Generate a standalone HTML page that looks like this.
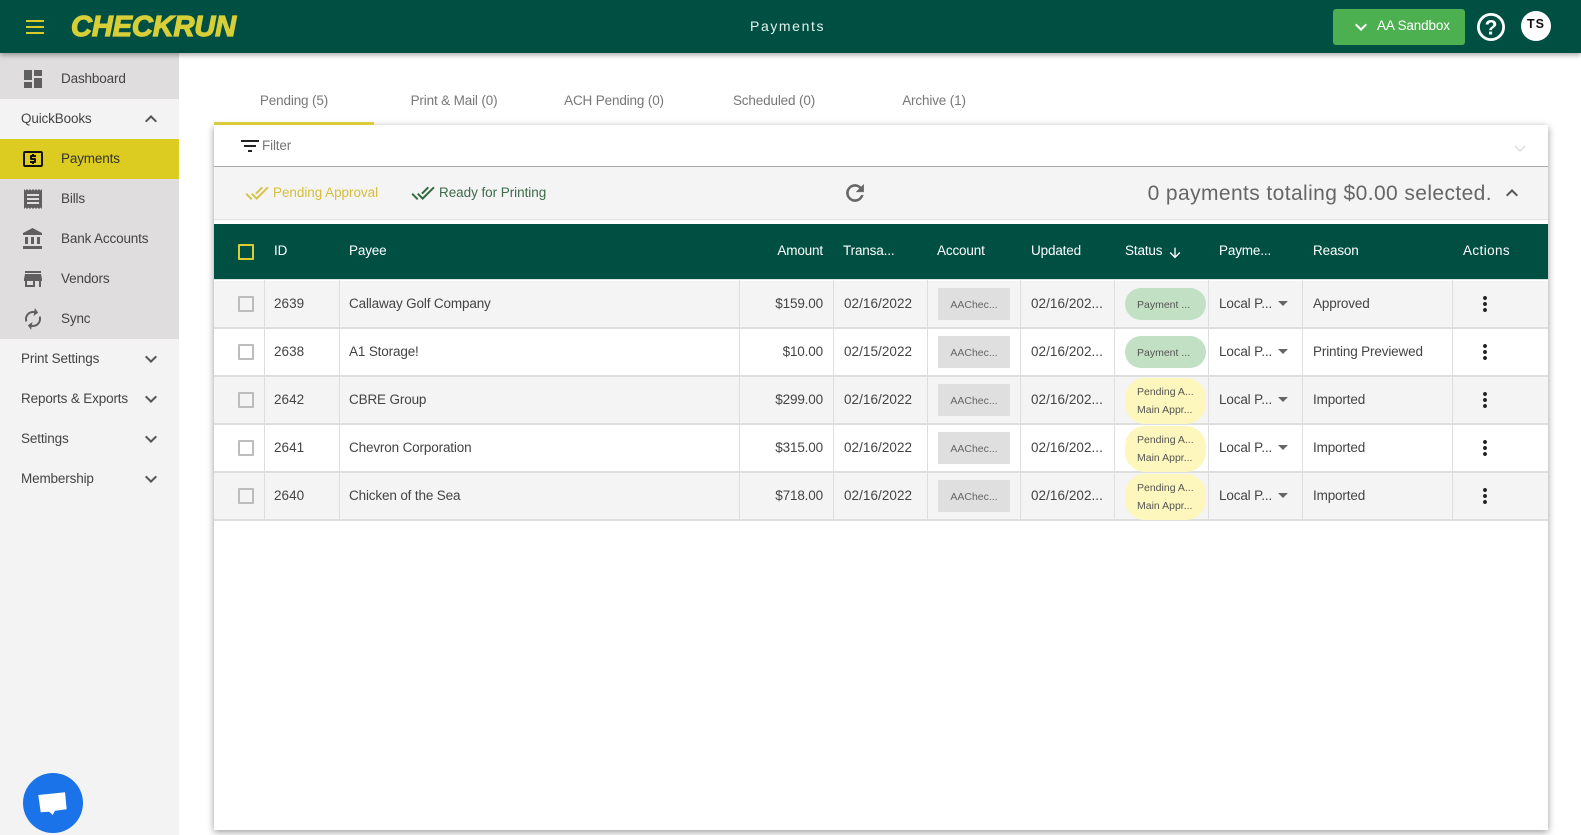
<!DOCTYPE html>
<html><head><meta charset="utf-8"><title>Payments</title>
<style>
*{box-sizing:border-box}
html,body{margin:0;padding:0;width:1581px;height:835px;overflow:hidden;background:#fff;font-family:"Liberation Sans",sans-serif;font-size:13.5px;letter-spacing:-.15px;color:#444}
.a{position:absolute;white-space:nowrap}
svg{position:absolute;display:block}
.hdr{left:0;top:0;width:1581px;height:53px;background:#004f43;box-shadow:0 2px 5px rgba(0,0,0,.35);z-index:5}
.side{left:0;top:53px;width:179px;height:782px;background:#f3f3f3}
.it{left:0;width:179px;height:40px;line-height:40px;color:#444}
.it .t{position:absolute;left:61px;top:0}
.grey{background:#dfdddd}
.card{left:214px;top:125px;width:1334px;height:705px;background:#fff;box-shadow:0 2px 7px rgba(0,0,0,.4)}
.th{color:#fff;top:224px;height:55px;line-height:53px;z-index:2}
.cell{height:48px;line-height:47px;color:#444}
.d{letter-spacing:.05px}
.vl{width:1px;background:#dedede;top:280px;height:241px}
.row{left:214px;width:1334px;height:48px;border-bottom:2px solid #dedede}
.cb{left:238px;width:16px;height:16px;border:2px solid #bdbdbd;border-radius:1px}
.acc{left:938px;width:72px;height:32px;background:#dfdfdf;color:#666;font-size:10.5px;line-height:34px;text-align:center;letter-spacing:0}
.pill{left:1125px;width:81px;border-radius:20px;font-size:10.5px;color:#555;letter-spacing:0;padding-left:12px}
</style></head><body>

<div class="a hdr"></div>
<svg style="left:25px;top:19px;z-index:6" width="20" height="16"><path d="M1 2h18M1 8h18M1 14h18" stroke="#d8cb2a" stroke-width="2"/></svg>
<svg style="left:70px;top:8px;z-index:6" width="170" height="36"><text x="1" y="28" font-family="Liberation Sans" font-weight="700" font-style="italic" font-size="28.5" textLength="165" lengthAdjust="spacingAndGlyphs" fill="#d8cf38" stroke="#d8cf38" stroke-width="1.2">CHECKRUN</text></svg>
<div class="a" style="left:750px;top:18px;color:#e6f0ee;letter-spacing:1.6px;z-index:6;font-size:14px">Payments</div>
<div class="a" style="left:1333px;top:9px;width:132px;height:36px;background:#4caf50;border-radius:3px;z-index:6"></div>
<svg style="left:1349px;top:15px;z-index:7" width="24" height="24" viewBox="0 0 24 24"><path fill="#fff" d="M16.59 8.59L12 13.17 7.41 8.59 6 10l6 6 6-6z"/></svg>
<div class="a" style="left:1377px;top:18px;color:#fff;z-index:7">AA Sandbox</div>
<svg style="left:1476px;top:12px;z-index:7" width="30" height="30" viewBox="0 0 30 30"><circle cx="15" cy="15" r="12.600" fill="none" stroke="#fff" stroke-width="2.800"/><text x="15" y="22.500" text-anchor="middle" font-family="Liberation Sans" font-weight="700" font-size="21" fill="#fff">?</text></svg>
<div class="a" style="left:1521px;top:11px;width:30px;height:30px;border-radius:50%;background:#fff;color:#111;z-index:7;font-weight:700;font-size:12.500px;text-align:center;line-height:27px;letter-spacing:1px">TS</div>

<div class="a side"></div>
<div class="a it grey" style="top:59px;height:40px"><svg style="left:21px;top:8px" width="24" height="24" viewBox="0 0 24 24"><path fill="#5f5f5f" d="M3 13h8V3H3v10zm0 8h8v-6H3v6zm10 0h8V11h-8v10zm0-18v6h8V3h-8z"/></svg><span class="t">Dashboard</span></div>
<div class="a" style="left:0;top:53px;width:179px;height:6px;background:#dfdddd"></div>
<div class="a it" style="top:99px"><span class="t" style="left:21px">QuickBooks</span><svg style="left:139px;top:8px" width="24" height="24" viewBox="0 0 24 24"><path fill="#555" d="M12 8l-6 6 1.41 1.41L12 10.83l4.59 4.58L18 14z"/></svg></div>
<div class="a it" style="top:139px;background:#dccb20;color:#333"><svg style="left:21px;top:8px" width="24" height="24" viewBox="0 0 24 24"><path fill="#111" d="M11 17h2v-1h1c.55 0 1-.45 1-1v-3c0-.55-.45-1-1-1h-3v-1h4V8h-2V7h-2v1h-1c-.55 0-1 .45-1 1v3c0 .55.45 1 1 1h3v1H9v2h2v1zm9-13H4c-1.11 0-1.99.89-1.99 2L2 18c0 1.11.89 2 2 2h16c1.11 0 2-.89 2-2V6c0-1.11-.89-2-2-2zm0 14H4V6h16v12z"/></svg><span class="t">Payments</span></div>
<div class="a it grey" style="top:179px"><svg style="left:21px;top:8px" width="24" height="24" viewBox="0 0 24 24"><path fill="#5f5f5f" d="M18 17H6v-2h12v2zm0-4H6v-2h12v2zm0-4H6V7h12v2zM3 22l1.5-1.5L6 22l1.5-1.5L9 22l1.5-1.5L12 22l1.5-1.5L15 22l1.5-1.5L18 22l1.5-1.5L21 22V2l-1.5 1.5L18 2l-1.5 1.5L15 2l-1.5 1.5L12 2l-1.5 1.5L9 2 7.5 3.5 6 2 4.5 3.5 3 2v20z"/></svg><span class="t">Bills</span></div>
<div class="a it grey" style="top:219px"><svg style="left:21px;top:8px" width="24" height="24" viewBox="0 0 24 24"><path fill="#5f5f5f" d="M4 10v7h3v-7H4zm6 0v7h3v-7h-3zM2 22h19v-3H2v3zm14-12v7h3v-7h-3zm-4.5-9L2 6v2h19V6l-9.5-5z"/></svg><span class="t">Bank Accounts</span></div>
<div class="a it grey" style="top:259px"><svg style="left:21px;top:8px" width="24" height="24" viewBox="0 0 24 24"><path fill="#5f5f5f" d="M20 4H4v2h16V4zm1 10v-2l-1-5H4l-1 5v2h1v6h10v-6h4v6h2v-6h1zm-9 4H6v-4h6v4z"/></svg><span class="t">Vendors</span></div>
<div class="a it grey" style="top:299px"><svg style="left:21px;top:8px;transform:scaleX(-1) rotate(-10deg)" width="24" height="24" viewBox="0 0 24 24"><path fill="#5f5f5f" d="M12 4V1L8 5l4 4V6c3.31 0 6 2.69 6 6 0 1.01-.25 1.97-.7 2.8l1.46 1.46C19.54 15.03 20 13.57 20 12c0-4.42-3.58-8-8-8zm0 14c-3.31 0-6-2.69-6-6 0-1.01.25-1.97.7-2.8L5.24 7.74C4.46 8.97 4 10.43 4 12c0 4.42 3.58 8 8 8v3l4-4-4-4v3z"/></svg><span class="t">Sync</span></div>
<div class="a it" style="top:339px"><span class="t" style="left:21px">Print Settings</span><svg style="left:139px;top:8px" width="24" height="24" viewBox="0 0 24 24"><path fill="#555" d="M16.59 8.59L12 13.17 7.41 8.59 6 10l6 6 6-6z"/></svg></div>
<div class="a it" style="top:379px"><span class="t" style="left:21px">Reports &amp; Exports</span><svg style="left:139px;top:8px" width="24" height="24" viewBox="0 0 24 24"><path fill="#555" d="M16.59 8.59L12 13.17 7.41 8.59 6 10l6 6 6-6z"/></svg></div>
<div class="a it" style="top:419px"><span class="t" style="left:21px">Settings</span><svg style="left:139px;top:8px" width="24" height="24" viewBox="0 0 24 24"><path fill="#555" d="M16.59 8.59L12 13.17 7.41 8.59 6 10l6 6 6-6z"/></svg></div>
<div class="a it" style="top:459px"><span class="t" style="left:21px">Membership</span><svg style="left:139px;top:8px" width="24" height="24" viewBox="0 0 24 24"><path fill="#555" d="M16.59 8.59L12 13.17 7.41 8.59 6 10l6 6 6-6z"/></svg></div>

<svg style="left:23px;top:773px" width="60" height="60" viewBox="0 0 60 60"><circle cx="30" cy="30" r="30" fill="#1a73e8"/><path fill="#fff" d="M15.300 22L42 19.300 43.700 36.300 32 37.700 29.700 42 26.300 38.700 17.700 39.300z"/></svg>

<!-- tabs -->
<div class="a" style="left:214px;top:93px;width:160px;text-align:center;color:#777">Pending (5)</div>
<div class="a" style="left:374px;top:93px;width:160px;text-align:center;color:#777">Print &amp; Mail (0)</div>
<div class="a" style="left:534px;top:93px;width:160px;text-align:center;color:#777">ACH Pending (0)</div>
<div class="a" style="left:694px;top:93px;width:160px;text-align:center;color:#777">Scheduled (0)</div>
<div class="a" style="left:854px;top:93px;width:160px;text-align:center;color:#777">Archive (1)</div>

<div class="a card"></div>
<div class="a" style="left:214px;top:122px;width:160px;height:3px;background:#dccb3a;z-index:3"></div>
<!-- filter -->
<svg style="left:238px;top:134px" width="24" height="24" viewBox="0 0 24 24"><path fill="#222" d="M10 18h4v-2h-4v2zM3 6v2h18V6H3zm3 7h12v-2H6v2z"/></svg>
<div class="a" style="left:262px;top:138px;color:#777">Filter</div>
<svg style="left:1508px;top:136px" width="24" height="24" viewBox="0 0 24 24"><path fill="none" stroke="#ddd" stroke-width="1.4" d="M7 10l5 5 5-5"/></svg>
<div class="a" style="left:214px;top:166px;width:1334px;height:54px;background:#f4f4f4;border-top:1.5px solid #aaa;border-bottom:1.5px solid #e2e2e2"></div>
<svg style="left:245px;top:181px" width="24" height="24" viewBox="0 0 24 24"><path fill="#d8c44a" d="M18 7l-1.41-1.41-6.34 6.34 1.41 1.410L18 7zm4.240-1.410L11.660 16.170 7.480 12l-1.410 1.410L11.660 19l12-12-1.420-1.410zM.41 13.410L6 19l1.410-1.410L1.830 12 .41 13.410z"/></svg>
<div class="a" style="left:273px;top:185px;color:#d6bd3c;letter-spacing:-.05px">Pending Approval</div>
<svg style="left:411px;top:181px" width="24" height="24" viewBox="0 0 24 24"><path fill="#2f6b3f" d="M18 7l-1.41-1.41-6.34 6.34 1.41 1.410L18 7zm4.240-1.410L11.660 16.170 7.480 12l-1.410 1.410L11.660 19l12-12-1.420-1.410zM.41 13.410L6 19l1.410-1.410L1.830 12 .41 13.410z"/></svg>
<div class="a" style="left:439px;top:185px;color:#3f6b4a;letter-spacing:-.05px">Ready for Printing</div>
<svg style="left:842px;top:180px" width="26" height="26" viewBox="0 0 24 24"><path fill="#666" stroke="#666" stroke-width=".4" d="M17.65 6.350C16.200 4.900 14.210 4 12 4c-4.420 0-7.990 3.580-7.990 8s3.570 8 7.990 8c3.730 0 6.840-2.550 7.730-6h-2.080c-.82 2.330-3.040 4-5.650 4-3.310 0-6-2.690-6-6s2.690-6 6-6c1.660 0 3.140.69 4.220 1.780L13 11h7V4l-2.350 2.350z"/></svg>
<div class="a" style="left:1132px;top:182px;width:360px;text-align:right;font-size:21px;color:#666;letter-spacing:.4px">0 payments totaling $0.00 selected.</div>
<svg style="left:1500px;top:181px" width="24" height="24" viewBox="0 0 24 24"><path fill="#555" d="M12 8l-6 6 1.41 1.41L12 10.830l4.590 4.580L18 14z"/></svg>

<!-- table head -->
<div class="a" style="left:214px;top:224px;width:1334px;height:56px;background:#004f43;border-bottom:1px solid #d8e6e2"></div>
<div class="a" style="left:238px;top:244px;width:16px;height:16px;border:2px solid #d8cf38;border-radius:1px;z-index:2"></div>
<div class="a th" style="left:274px">ID</div>
<div class="a th" style="left:349px">Payee</div>
<div class="a th" style="left:723px;width:100px;text-align:right">Amount</div>
<div class="a th" style="left:843px">Transa...</div>
<div class="a th" style="left:937px">Account</div>
<div class="a th" style="left:1031px">Updated</div>
<div class="a th" style="left:1125px">Status</div>
<svg style="left:1167px;top:245px;z-index:3" width="16" height="16" viewBox="0 0 24 24"><path fill="#fff" d="M20 12l-1.410-1.410L13 16.170V4h-2v12.170l-5.580-5.590L4 12l8 8 8-8z"/></svg>
<div class="a th" style="left:1219px">Payme...</div>
<div class="a th" style="left:1313px">Reason</div>
<div class="a th" style="left:1463px;letter-spacing:.4px">Actions</div>

<!-- rows -->
<div class="a row" style="top:281px;background:#f4f4f4"></div>
<div class="a row" style="top:329px;background:#fff"></div>
<div class="a row" style="top:377px;background:#f4f4f4"></div>
<div class="a row" style="top:425px;background:#fff"></div>
<div class="a row" style="top:473px;background:#f4f4f4"></div>
<div class="a vl" style="left:264px"></div><div class="a vl" style="left:339px"></div><div class="a vl" style="left:739px"></div><div class="a vl" style="left:833px"></div><div class="a vl" style="left:927px"></div><div class="a vl" style="left:1020px"></div><div class="a vl" style="left:1114px"></div><div class="a vl" style="left:1208px"></div><div class="a vl" style="left:1302px"></div><div class="a vl" style="left:1452px"></div>

<div class="a cb" style="top:296px"></div><div class="a cell d" style="left:274px;top:280px">2639</div><div class="a cell" style="left:349px;top:280px">Callaway Golf Company</div><div class="a cell" style="left:723px;top:280px;width:100px;text-align:right">$159.00</div><div class="a cell d" style="left:844px;top:280px">02/16/2022</div><div class="a acc" style="top:288px">AAChec...</div><div class="a cell d" style="left:1031px;top:280px">02/16/202...</div><div class="a pill" style="top:288px;height:32px;line-height:35px;background:#c2e0c4">Payment ...</div><div class="a cell" style="left:1219px;top:280px">Local P...</div><div class="a cell" style="left:1313px;top:280px">Approved</div>
<div class="a cb" style="top:344px"></div><div class="a cell d" style="left:274px;top:328px">2638</div><div class="a cell" style="left:349px;top:328px">A1 Storage!</div><div class="a cell" style="left:723px;top:328px;width:100px;text-align:right">$10.00</div><div class="a cell d" style="left:844px;top:328px">02/15/2022</div><div class="a acc" style="top:336px">AAChec...</div><div class="a cell d" style="left:1031px;top:328px">02/16/202...</div><div class="a pill" style="top:336px;height:32px;line-height:35px;background:#c2e0c4">Payment ...</div><div class="a cell" style="left:1219px;top:328px">Local P...</div><div class="a cell" style="left:1313px;top:328px">Printing Previewed</div>
<div class="a cb" style="top:392px"></div><div class="a cell d" style="left:274px;top:376px">2642</div><div class="a cell" style="left:349px;top:376px">CBRE Group</div><div class="a cell" style="left:723px;top:376px;width:100px;text-align:right">$299.00</div><div class="a cell d" style="left:844px;top:376px">02/16/2022</div><div class="a acc" style="top:384px">AAChec...</div><div class="a cell d" style="left:1031px;top:376px">02/16/202...</div><div class="a pill" style="top:378px;height:46px;line-height:18px;padding-top:5px;background:#fdf7bd">Pending A...<br>Main Appr...</div><div class="a cell" style="left:1219px;top:376px">Local P...</div><div class="a cell" style="left:1313px;top:376px">Imported</div>
<div class="a cb" style="top:440px"></div><div class="a cell d" style="left:274px;top:424px">2641</div><div class="a cell" style="left:349px;top:424px">Chevron Corporation</div><div class="a cell" style="left:723px;top:424px;width:100px;text-align:right">$315.00</div><div class="a cell d" style="left:844px;top:424px">02/16/2022</div><div class="a acc" style="top:432px">AAChec...</div><div class="a cell d" style="left:1031px;top:424px">02/16/202...</div><div class="a pill" style="top:426px;height:46px;line-height:18px;padding-top:5px;background:#fdf7bd">Pending A...<br>Main Appr...</div><div class="a cell" style="left:1219px;top:424px">Local P...</div><div class="a cell" style="left:1313px;top:424px">Imported</div>
<div class="a cb" style="top:488px"></div><div class="a cell d" style="left:274px;top:472px">2640</div><div class="a cell" style="left:349px;top:472px">Chicken of the Sea</div><div class="a cell" style="left:723px;top:472px;width:100px;text-align:right">$718.00</div><div class="a cell d" style="left:844px;top:472px">02/16/2022</div><div class="a acc" style="top:480px">AAChec...</div><div class="a cell d" style="left:1031px;top:472px">02/16/202...</div><div class="a pill" style="top:474px;height:46px;line-height:18px;padding-top:5px;background:#fdf7bd">Pending A...<br>Main Appr...</div><div class="a cell" style="left:1219px;top:472px">Local P...</div><div class="a cell" style="left:1313px;top:472px">Imported</div>

<svg style="left:1277px;top:297px" width="12" height="12"><path fill="#666" d="M1 4h10l-5 5z"/></svg>
<svg style="left:1277px;top:345px" width="12" height="12"><path fill="#666" d="M1 4h10l-5 5z"/></svg>
<svg style="left:1277px;top:393px" width="12" height="12"><path fill="#666" d="M1 4h10l-5 5z"/></svg>
<svg style="left:1277px;top:441px" width="12" height="12"><path fill="#666" d="M1 4h10l-5 5z"/></svg>
<svg style="left:1277px;top:489px" width="12" height="12"><path fill="#666" d="M1 4h10l-5 5z"/></svg>

<svg style="left:1473px;top:292px" width="24" height="24" viewBox="0 0 24 24"><path fill="#222" d="M12 8c1.100 0 2-.9 2-2s-.9-2-2-2-2 .9-2 2 .9 2 2 2zm0 2c-1.100 0-2 .9-2 2s.9 2 2 2 2-.9 2-2-.9-2-2-2zm0 6c-1.100 0-2 .9-2 2s.9 2 2 2 2-.9 2-2-.9-2-2-2z"/></svg>
<svg style="left:1473px;top:340px" width="24" height="24" viewBox="0 0 24 24"><path fill="#222" d="M12 8c1.100 0 2-.9 2-2s-.9-2-2-2-2 .9-2 2 .9 2 2 2zm0 2c-1.100 0-2 .9-2 2s.9 2 2 2 2-.9 2-2-.9-2-2-2zm0 6c-1.100 0-2 .9-2 2s.9 2 2 2 2-.9 2-2-.9-2-2-2z"/></svg>
<svg style="left:1473px;top:388px" width="24" height="24" viewBox="0 0 24 24"><path fill="#222" d="M12 8c1.100 0 2-.9 2-2s-.9-2-2-2-2 .9-2 2 .9 2 2 2zm0 2c-1.100 0-2 .9-2 2s.9 2 2 2 2-.9 2-2-.9-2-2-2zm0 6c-1.100 0-2 .9-2 2s.9 2 2 2 2-.9 2-2-.9-2-2-2z"/></svg>
<svg style="left:1473px;top:436px" width="24" height="24" viewBox="0 0 24 24"><path fill="#222" d="M12 8c1.100 0 2-.9 2-2s-.9-2-2-2-2 .9-2 2 .9 2 2 2zm0 2c-1.100 0-2 .9-2 2s.9 2 2 2 2-.9 2-2-.9-2-2-2zm0 6c-1.100 0-2 .9-2 2s.9 2 2 2 2-.9 2-2-.9-2-2-2z"/></svg>
<svg style="left:1473px;top:484px" width="24" height="24" viewBox="0 0 24 24"><path fill="#222" d="M12 8c1.100 0 2-.9 2-2s-.9-2-2-2-2 .9-2 2 .9 2 2 2zm0 2c-1.100 0-2 .9-2 2s.9 2 2 2 2-.9 2-2-.9-2-2-2zm0 6c-1.100 0-2 .9-2 2s.9 2 2 2 2-.9 2-2-.9-2-2-2z"/></svg>
</body></html>
